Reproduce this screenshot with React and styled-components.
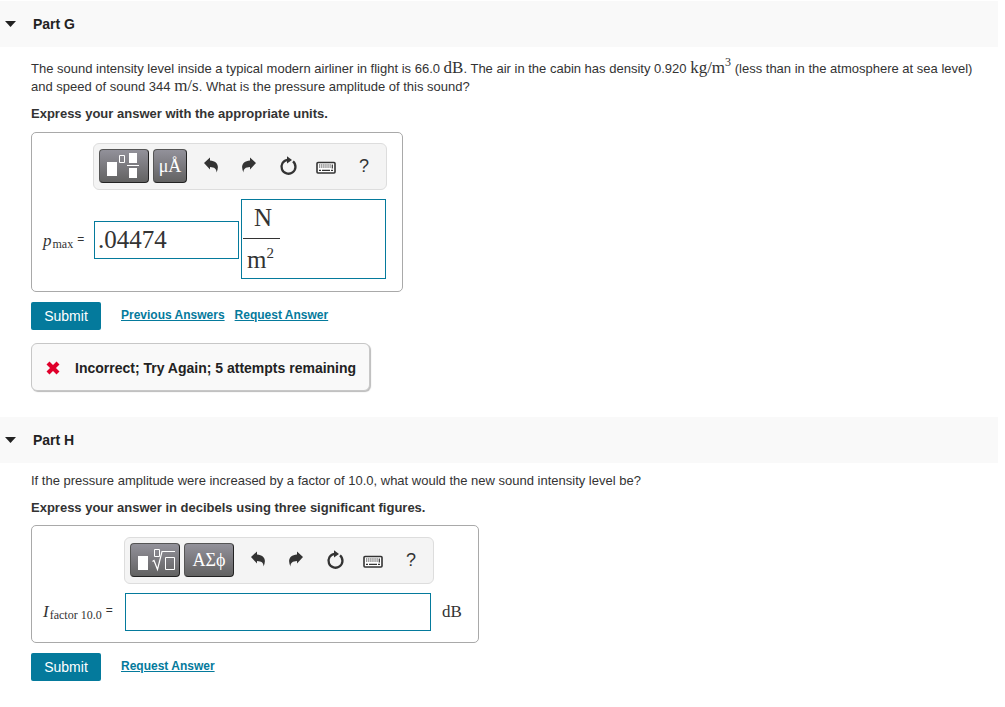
import React, { useId, useState } from "react";
import styled, { createGlobalStyle } from "styled-components";

const sans = `"Liberation Sans", Arial, sans-serif`;
const serif = `"Liberation Serif", "Times New Roman", serif`;

const GlobalStyle = createGlobalStyle`
  *, *::before, *::after { box-sizing: border-box; }
  body { margin: 0; background: #fff; color: #333; font: 13px/18px ${sans}; }
`;

const Page = styled.main`
  padding: 1px 7px 26px 0;
`;

const PartHeading = styled.h2`
  margin: 0;
  background: #f9f9f9;
`;

const PartToggle = styled.button`
  display: flex;
  align-items: center;
  gap: 17px;
  width: 100%;
  height: 46px;
  padding: 0 5px;
  border: 0;
  background: none;
  color: #222;
  font: bold 14px/18px ${sans};
  text-align: left;
  cursor: pointer;
`;

const PartBody = styled.div`
  padding: ${(p) => p.$top}px 12px 26px 31px;
`;

const Question = styled.p`
  margin: 0 0 9px;
`;

const Instruction = styled.p`
  margin: 0 0 ${(p) => p.$gap}px;
  font-weight: bold;
`;

const MathText = styled.span`
  font-family: ${serif};
  font-size: 17px;
  line-height: 1px;
`;

const Sup = styled.span`
  font-family: ${serif};
  font-size: ${(p) => p.$size}px;
  line-height: 1px;
  vertical-align: ${(p) => p.$rise}px;
`;

const AnswerBox = styled.div`
  display: grid;
  grid-template-columns: ${(p) => p.$label}px auto auto;
  row-gap: 9px;
  align-items: center;
  width: fit-content;
  padding: ${(p) => p.$top}px 15px ${(p) => p.$bottom}px 11px;
  border: 1px solid #a9a9a9;
  border-radius: 5px;
`;

const Toolbar = styled.div`
  grid-column: 2;
  display: flex;
  align-items: flex-start;
  height: 47px;
  padding: 5px 3px 6px 5px;
  border: 1px solid #ddd;
  border-radius: 6px;
  background: #f4f4f4;
`;

const PaletteButton = styled.button`
  display: flex;
  align-items: center;
  justify-content: center;
  width: ${(p) => (p.$wide ? 50 : 34)}px;
  height: 34px;
  margin-right: 4px;
  padding: 0;
  border: 1px solid #555;
  border-right-color: #222;
  border-bottom-color: #222;
  border-radius: 4px;
  background: linear-gradient(#92919a, #626262);
  color: #fff;
  font: 18px/24px ${serif};
`;

const Tools = styled.div`
  display: flex;
  margin-left: 2px;
`;

const ToolButton = styled.button`
  display: flex;
  align-items: center;
  justify-content: center;
  width: 38px;
  height: 34px;
  padding: 0;
  border: 0;
  background: none;
  color: #333;
  font: 18px/24px ${sans};
`;

const Label = styled.label`
  grid-column: 1;
  display: flex;
  align-items: center;
  gap: 4px;
  padding-top: ${(p) => p.$drop}px;
  white-space: nowrap;
  font-size: 12px;
`;

const Variable = styled.span`
  font-family: ${serif};
  font-size: 17px;
  font-style: italic;
`;

const Sub = styled.sub`
  margin-left: 1px;
  font-size: 12px;
  line-height: 12px;
  font-style: normal;
  vertical-align: -2px;
`;

const Equals = styled.span`
  padding-bottom: 4px;
`;

const Fields = styled.div`
  display: flex;
  align-items: flex-end;
  gap: 2px;
  padding: 0 ${(p) => p.$right}px 0 1px;
`;

const AnswerInput = styled.input`
  width: ${(p) => p.$width}px;
  height: 38px;
  margin-bottom: ${(p) => p.$lift || 0}px;
  padding: 0 3px;
  border: 1px solid #047a9c;
  border-radius: 0;
  background: #fff;
  color: #333;
  font: 25px/30px ${serif};
`;

const UnitField = styled.div`
  width: 145px;
  height: 80px;
  padding: 1px;
  border: 1px solid #047a9c;
  color: #333;
  font: 25px/37px ${serif};
`;

const Fraction = styled.div`
  display: grid;
  width: 37px;
`;

const Numerator = styled.div`
  padding: 0 0 3px 3px;
  border-bottom: 1px solid #333;
  line-height: 34px;
  text-align: center;
`;

const Denominator = styled.div`
  padding: 2px 0 0 4px;
`;

const Unit = styled(MathText)`
  min-width: 29px;
  padding-left: 8px;
  line-height: 20px;
`;

const Actions = styled.div`
  display: flex;
  align-items: center;
  gap: 10px;
  margin-top: 10px;
`;

const SubmitButton = styled.button`
  width: 70px;
  height: 28px;
  margin-right: 10px;
  padding: 0;
  border: 0;
  border-radius: 2px;
  background: #047a9c;
  color: #fff;
  font: 14px/18px ${sans};
`;

const ActionLink = styled.a`
  padding-bottom: 2px;
  color: #047a9c;
  font-size: 12px;
  font-weight: bold;
`;

const Feedback = styled.div`
  display: flex;
  align-items: center;
  gap: 15px;
  width: fit-content;
  height: 48px;
  margin-top: 13px;
  padding: 2px 13px 0 14px;
  border: 1px solid #c7c7c7;
  border-radius: 6px;
  background: #f9f9f9;
  box-shadow: 1px 1px 1px #bbb;
  color: #222;
  font-size: 14px;
  font-weight: bold;
`;

const Caret = () => (
  <svg width="11" height="6" viewBox="0 0 11 6" aria-hidden="true">
    <path d="M0 0h11L5.5 6z" fill="#222" />
  </svg>
);

const CrossIcon = () => (
  <svg width="14" height="14" viewBox="0 0 14 14" aria-hidden="true">
    <path d="M2 2l10 10M12 2l-10 10" stroke="#e0002b" strokeWidth="4.200" fill="none" />
  </svg>
);

const UndoIcon = ({ flip }) => (
  <svg width="16" height="18" viewBox="0 0 16 18" aria-hidden="true">
    <path
      transform={flip ? "matrix(-1 0 0 1 14 0)" : undefined}
      d="M0 6 6 .4v3c5 .3 8 3 7.900 6.900-.1 1.900-.6 3.600-1.400 5.100.1-3.600-2-5.200-6.500-5.400v2.600z"
      fill="currentColor"
    />
  </svg>
);

const ResetIcon = () => (
  <svg width="18" height="20" viewBox="0 0 18 20" aria-hidden="true">
    <path d="M14 5.400A7 7 0 1 1 8.500 3.800" stroke="currentColor" strokeWidth="2.300" fill="none" />
    <path d="M8 .3 13 4 8 7.500z" fill="currentColor" />
  </svg>
);

const KeyboardIcon = () => (
  <svg width="20" height="16" viewBox="0 0 20 16" aria-hidden="true">
    <rect x="1" y="4.500" width="18" height="10.500" rx="1" stroke="currentColor" strokeWidth="1.600" fill="#fff" />
    <path d="M3 7h12.500M3 9h12.500" stroke="currentColor" strokeWidth="1.200" strokeDasharray="1.300 .8" />
    <path d="M3 12.300h2M6 12.300h8M15 12.300h2M16.300 6.500v4" stroke="currentColor" strokeWidth="1.200" />
  </svg>
);

const FractionTemplateIcon = () => (
  <svg width="34" height="28" viewBox="0 0 34 28" aria-hidden="true">
    <path d="M0 10h10v14H0zM22 1h8v10h-8zM22 16h8v10h-8zM20 13h12v1H20z" fill="#fff" />
    <path d="M12.500 3.500h5v7h-5z" stroke="#fff" fill="none" />
  </svg>
);

const RootTemplateIcon = () => (
  <svg width="40" height="28" viewBox="0 0 40 28" aria-hidden="true">
    <path d="M3 10h10v14H3z" fill="#fff" />
    <path d="M19.500 3.500h5v7h-5zM30.500 11.500h9v12h-9z" stroke="#fff" fill="none" />
    <path d="M17.500 15.500l1.500-1 3.500 9L27 5.500H40" stroke="#fff" strokeWidth="1.200" fill="none" />
  </svg>
);

function Part({ title, top, children }) {
  const [open, setOpen] = useState(true);
  return (
    <section>
      <PartHeading>
        <PartToggle type="button" aria-expanded={open} onClick={() => setOpen(!open)}>
          <Caret />
          {title}
        </PartToggle>
      </PartHeading>
      {open && <PartBody $top={top}>{children}</PartBody>}
    </section>
  );
}

function EditorToolbar({ template, symbols, wideSymbols }) {
  return (
    <Toolbar role="toolbar" aria-label="Equation tools">
      <PaletteButton type="button" $wide aria-label="Templates">{template}</PaletteButton>
      <PaletteButton type="button" $wide={wideSymbols}>{symbols}</PaletteButton>
      <Tools>
        <ToolButton type="button" aria-label="Undo"><UndoIcon /></ToolButton>
        <ToolButton type="button" aria-label="Redo"><UndoIcon flip /></ToolButton>
        <ToolButton type="button" aria-label="Reset"><ResetIcon /></ToolButton>
        <ToolButton type="button" aria-label="Keyboard shortcuts"><KeyboardIcon /></ToolButton>
        <ToolButton type="button">?</ToolButton>
      </Tools>
    </Toolbar>
  );
}

export default function App() {
  const pressureId = useId();
  const levelId = useId();
  const [pressure, setPressure] = useState(".04474");
  const [level, setLevel] = useState("");

  return (
    <Page>
      <GlobalStyle />
      <Part title="Part G" top={13}>
        <Question>
          The sound intensity level inside a typical modern airliner in flight is 66.0 <MathText>dB</MathText>. The air
          in the cabin has density 0.920 <MathText>kg/m<Sup $size={12} $rise={7}>3</Sup></MathText> (less than in the
          atmosphere at sea level) and speed of sound 344 <MathText>m/s</MathText>. What is the pressure amplitude of
          this sound?
        </Question>
        <Instruction $gap={9}>Express your answer with the appropriate units.</Instruction>
        <AnswerBox $label={50} $top={10} $bottom={12}>
          <EditorToolbar template={<FractionTemplateIcon />} symbols="μÅ" />
          <Label htmlFor={pressureId} $drop={4}>
            <Variable>p<Sub>max</Sub></Variable> <Equals>=</Equals>
          </Label>
          <Fields $right={1}>
            <AnswerInput
              id={pressureId}
              $width={145}
              $lift={20}
              value={pressure}
              onChange={(e) => setPressure(e.target.value)}
            />
            <UnitField role="textbox" aria-label="Units" tabIndex={0}>
              <Fraction>
                <Numerator>N</Numerator>
                <Denominator>m<Sup $size={15} $rise={10}>2</Sup></Denominator>
              </Fraction>
            </UnitField>
          </Fields>
        </AnswerBox>
        <Actions>
          <SubmitButton type="button">Submit</SubmitButton>
          <ActionLink href="#previous">Previous Answers</ActionLink>
          <ActionLink href="#request-g">Request Answer</ActionLink>
        </Actions>
        <Feedback role="status">
          <CrossIcon />
          Incorrect; Try Again; 5 attempts remaining
        </Feedback>
      </Part>
      <Part title="Part H" top={9}>
        <Question>
          If the pressure amplitude were increased by a factor of 10.0, what would the new sound intensity level be?
        </Question>
        <Instruction $gap={8}>Express your answer in decibels using three significant figures.</Instruction>
        <AnswerBox $label={81} $top={11} $bottom={11}>
          <EditorToolbar template={<RootTemplateIcon />} symbols="ΑΣϕ" wideSymbols />
          <Label htmlFor={levelId} $drop={0}>
            <Variable>I<Sub>factor 10.0</Sub></Variable> <Equals>=</Equals>
          </Label>
          <Fields $right={3}>
            <AnswerInput id={levelId} $width={306} value={level} onChange={(e) => setLevel(e.target.value)} />
          </Fields>
          <Unit>dB</Unit>
        </AnswerBox>
        <Actions>
          <SubmitButton type="button">Submit</SubmitButton>
          <ActionLink href="#request-h">Request Answer</ActionLink>
        </Actions>
      </Part>
    </Page>
  );
}
